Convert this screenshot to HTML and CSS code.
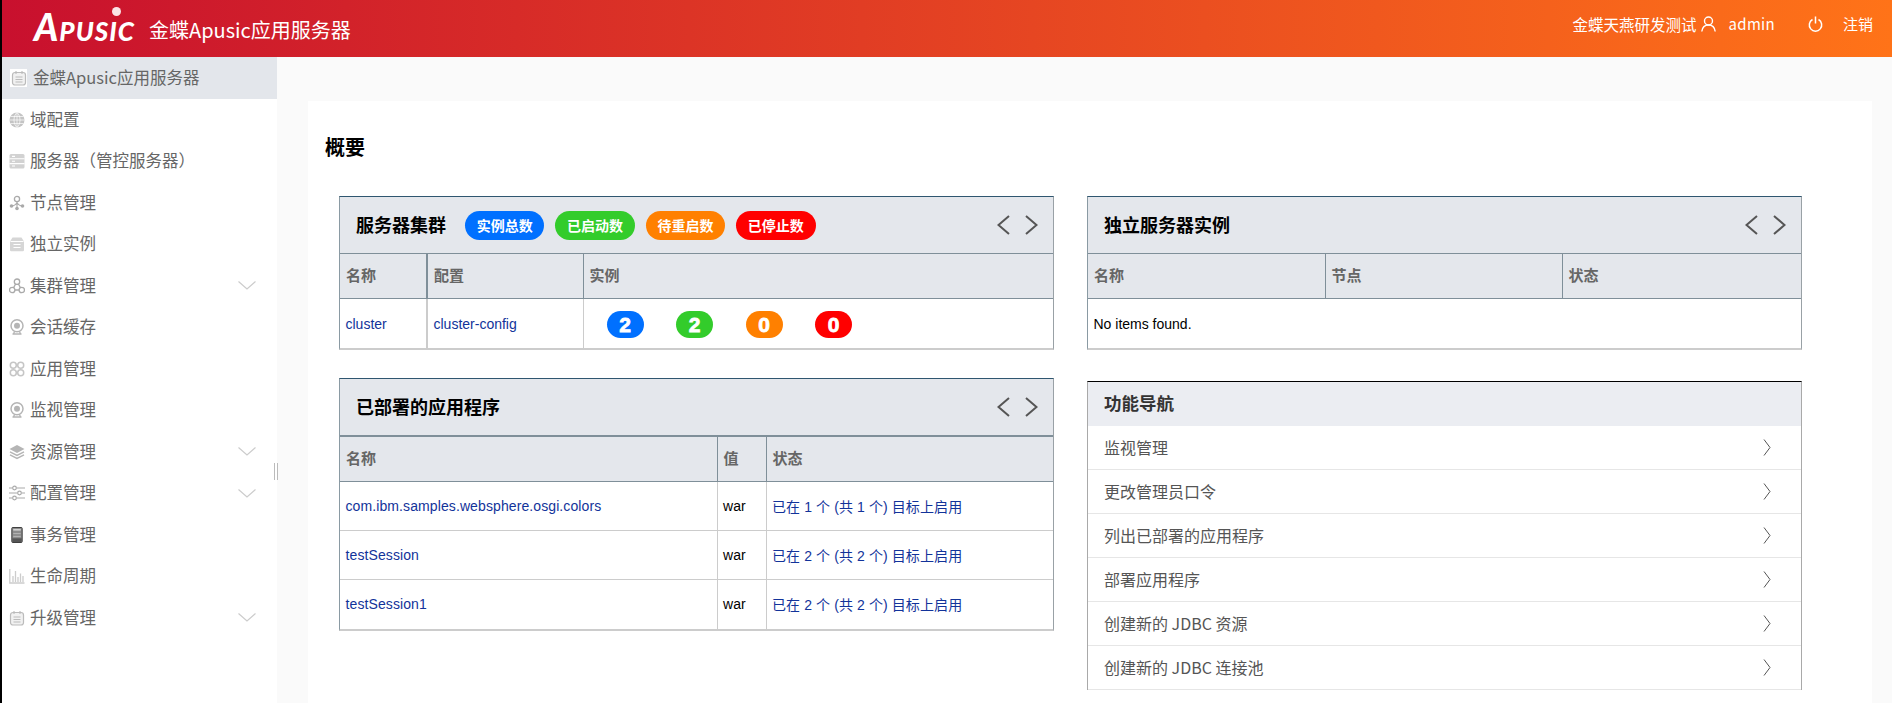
FILE: index.html
```html
<!DOCTYPE html>
<html lang="zh-CN">
<head>
<meta charset="utf-8">
<title>金蝶Apusic应用服务器</title>
<link rel="stylesheet" href="styles.css">
</head>
<body>
<svg class="defs" width="0" height="0" aria-hidden="true">
  <defs>
    <symbol id="i-cal" viewBox="0 0 16 16"><rect x="1.5" y="2.5" width="13" height="12.5" rx="2.5" fill="#f1f1f1" stroke="#bbb" stroke-width="1.2"/><path d="M5 1v3M11 1v3M4.5 7h7M4.5 9.5h7M4.5 12h7" stroke="#bbb" stroke-width="1.1" fill="none"/></symbol>
    <symbol id="i-globe" viewBox="0 0 16 16"><circle cx="8" cy="8" r="7.5" fill="#c4c4c4"/><path d="M.5 8h15M1.5 4.5h13M1.5 11.5h13M8 .5v15M8 .5C4 4 4 12 8 15.5M8 .5c4 3.500 4 11.500 0 15" stroke="#fff" stroke-width=".7" fill="none"/></symbol>
    <symbol id="i-server" viewBox="0 0 16 16"><rect x=".5" y="1" width="15" height="14.500" rx="1.500" fill="#d2d2d2"/><path d="M.5 5.800h15M.5 10.600h15M3 3.400h3M3 8.200h3M3 13h3" stroke="#fff" stroke-width="1.100" fill="none"/></symbol>
    <symbol id="i-node" viewBox="0 0 16 16"><circle cx="8" cy="4" r="2.600" fill="none" stroke="#aaa" stroke-width="1.300"/><circle cx="2.500" cy="11" r="1.800" fill="#aaa"/><circle cx="13.500" cy="11" r="1.800" fill="#aaa"/><circle cx="8" cy="13.500" r="1.800" fill="#aaa"/><path d="M8 6.500v7M2.500 11c3 0 4-1 5.500-3.500 1.500 2.500 2.500 3.500 5.500 3.500" fill="none" stroke="#aaa" stroke-width="1.100"/></symbol>
    <symbol id="i-box" viewBox="0 0 16 16"><path d="M3.500 1.500h9l2.500 4v8.500a1.200 1.200 0 0 1-1.200 1.200H2.200A1.200 1.200 0 0 1 1 14V5.500z" fill="#d6d6d6"/><path d="M1.500 5.500h13M4.500 8.500h7M4.500 11.500h7" stroke="#fff" stroke-width="1.100" fill="none"/></symbol>
    <symbol id="i-cluster" viewBox="0 0 16 16"><g fill="none" stroke="#aaa" stroke-width="1.300"><circle cx="8" cy="3.700" r="2.700"/><circle cx="3.200" cy="12" r="2.700"/><circle cx="12.800" cy="12" r="2.700"/><path d="M6.600 6 4.600 9.600M9.400 6l2 3.600M6 12h4"/></g></symbol>
    <symbol id="i-cam" viewBox="0 0 16 16"><circle cx="8" cy="6.800" r="6" fill="none" stroke="#b5b5b5" stroke-width="1.500"/><circle cx="8" cy="6.800" r="3" fill="#b5b5b5"/><path d="M3.500 15h9M5.500 12.500l-1 2.500M10.500 12.500l1 2.500" fill="none" stroke="#b5b5b5" stroke-width="1.300"/></symbol>
    <symbol id="i-petal" viewBox="0 0 16 16"><g fill="none" stroke="#c6c6c6" stroke-width="1.500"><circle cx="4.300" cy="4.300" r="3"/><circle cx="11.700" cy="4.300" r="3"/><circle cx="4.300" cy="11.700" r="3"/><circle cx="11.700" cy="11.700" r="3"/></g></symbol>
    <symbol id="i-layers" viewBox="0 0 16 16"><path d="M8 1 15.500 5 8 9 .5 5z" fill="#b5b5b5"/><path d="M1 7.800 8 11.500l7-3.700M1 10.800 8 14.500l7-3.700" fill="none" stroke="#b5b5b5" stroke-width="1.500"/></symbol>
    <symbol id="i-sliders" viewBox="0 0 16 16"><g fill="none" stroke="#aaa" stroke-width="1.200"><path d="M0 3h3.500M7.500 3H16M0 8h8.500M12.500 8H16M0 13h3.500M7.500 13H16"/><circle cx="5.500" cy="3" r="1.800"/><circle cx="10.500" cy="8" r="1.800"/><circle cx="5.500" cy="13" r="1.800"/></g></symbol>
    <symbol id="i-tablet" viewBox="0 0 12 17"><rect x=".5" y=".5" width="11" height="16" rx="1" fill="#8c8c8c" stroke="#333"/><path d="M2 3h8" stroke="#dcdcdc" stroke-width="1.500"/><path d="M2 7h8M2 10h8" stroke="#b9b9b9"/><rect x="1" y="12" width="10" height="4" fill="#555"/></symbol>
    <symbol id="i-bars" viewBox="0 0 16 16"><path d="M.8 1v14h14.700" fill="none" stroke="#ccc" stroke-width="1.300"/><path d="M4 8v6M6.500 3v11M9 9v5M11.500 5.500V14M14 8v6" stroke="#ccc" stroke-width="1.300" fill="none"/></symbol>
    <symbol id="i-down" viewBox="0 0 18 9"><path d="M.5.500 9 8l8.500-7.500" fill="none" stroke="#ccc" stroke-width="1.200"/></symbol>
    <symbol id="i-prev" viewBox="0 0 13 20"><path d="M12 1 1.500 10 12 19" fill="none" stroke="#555" stroke-width="2"/></symbol>
    <symbol id="i-next" viewBox="0 0 13 20"><path d="M1 1l10.500 9L1 19" fill="none" stroke="#555" stroke-width="2"/></symbol>
    <symbol id="i-go" viewBox="0 0 8 17"><path d="M1 .5 7 8.500 1 16.500" fill="none" stroke="#555" stroke-width="1"/></symbol>
  </defs>
</svg>

<header class="topbar">
  <div class="logo">Apusic<span class="logo-dot"></span></div>
  <div class="product">金蝶Apusic应用服务器</div>
  <div class="topbar-right">
    <span class="org">金蝶天燕研发测试</span>
    <svg class="top-user" viewBox="0 0 15 16"><circle cx="7.500" cy="5" r="4" fill="none" stroke="#fff" stroke-width="1.400"/><path d="M.8 15.500c.5-4 3-6.500 6.700-6.500s6.200 2.500 6.700 6.500" fill="none" stroke="#fff" stroke-width="1.400"/></svg>
    <span class="user">admin</span>
    <svg class="top-power" viewBox="0 0 15 16"><path d="M4.500 3.500a6.200 6.200 0 1 0 6 0M7.500 .5v7" fill="none" stroke="#fff" stroke-width="1.500"/></svg>
    <span class="logout">注销</span>
  </div>
</header>

<div class="shell">
  <nav class="sidebar">
    <a class="side-item is-active"><span class="side-badge"><svg class="side-icon"><use href="#i-cal"/></svg></span><span class="side-label">金蝶Apusic应用服务器</span></a>
    <a class="side-item"><svg class="side-icon"><use href="#i-globe"/></svg><span class="side-label">域配置</span></a>
    <a class="side-item"><svg class="side-icon"><use href="#i-server"/></svg><span class="side-label">服务器（管控服务器）</span></a>
    <a class="side-item"><svg class="side-icon"><use href="#i-node"/></svg><span class="side-label">节点管理</span></a>
    <a class="side-item"><svg class="side-icon"><use href="#i-box"/></svg><span class="side-label">独立实例</span></a>
    <a class="side-item"><svg class="side-icon"><use href="#i-cluster"/></svg><span class="side-label">集群管理</span><svg class="side-caret"><use href="#i-down"/></svg></a>
    <a class="side-item"><svg class="side-icon"><use href="#i-cam"/></svg><span class="side-label">会话缓存</span></a>
    <a class="side-item"><svg class="side-icon"><use href="#i-petal"/></svg><span class="side-label">应用管理</span></a>
    <a class="side-item"><svg class="side-icon"><use href="#i-cam"/></svg><span class="side-label">监视管理</span></a>
    <a class="side-item"><svg class="side-icon"><use href="#i-layers"/></svg><span class="side-label">资源管理</span><svg class="side-caret"><use href="#i-down"/></svg></a>
    <a class="side-item"><svg class="side-icon"><use href="#i-sliders"/></svg><span class="side-label">配置管理</span><svg class="side-caret"><use href="#i-down"/></svg></a>
    <a class="side-item"><svg class="side-icon"><use href="#i-tablet"/></svg><span class="side-label">事务管理</span></a>
    <a class="side-item"><svg class="side-icon"><use href="#i-bars"/></svg><span class="side-label">生命周期</span></a>
    <a class="side-item"><svg class="side-icon"><use href="#i-cal"/></svg><span class="side-label">升级管理</span><svg class="side-caret"><use href="#i-down"/></svg></a>
    <span class="splitter"></span>
  </nav>

  <main class="main">
    <section class="panel">
      <h1 class="page-title">概要</h1>
      <div class="columns">
        <div class="column">
          <article class="card">
            <div class="card-head">
              <h2 class="card-title">服务器集群</h2>
              <span class="pill pill-blue">实例总数</span>
              <span class="pill pill-green">已启动数</span>
              <span class="pill pill-orange">待重启数</span>
              <span class="pill pill-red">已停止数</span>
              <span class="pager"><svg class="pager-icon"><use href="#i-prev"/></svg><svg class="pager-icon"><use href="#i-next"/></svg></span>
            </div>
            <table class="grid">
              <colgroup><col class="c1a"><col class="c1b"><col></colgroup>
              <thead><tr><th class="th-thick">名称</th><th>配置</th><th>实例</th></tr></thead>
              <tbody><tr class="row-tall">
                <td class="td-thick"><a>cluster</a></td><td><a>cluster-config</a></td>
                <td><div class="counts"><span class="count pill-blue">2</span><span class="count pill-green">2</span><span class="count pill-orange">0</span><span class="count pill-red">0</span></div></td>
              </tr></tbody>
            </table>
          </article>

          <article class="card card-apps">
            <div class="card-head">
              <h2 class="card-title">已部署的应用程序</h2>
              <span class="pager"><svg class="pager-icon"><use href="#i-prev"/></svg><svg class="pager-icon"><use href="#i-next"/></svg></span>
            </div>
            <table class="grid grid-thick">
              <colgroup><col class="c3a"><col class="c3b"><col></colgroup>
              <thead><tr><th>名称</th><th>值</th><th>状态</th></tr></thead>
              <tbody>
                <tr><td><a>com.ibm.samples.websphere.osgi.colors</a></td><td>war</td><td><a>已在 1 个 (共 1 个) 目标上启用</a></td></tr>
                <tr><td><a>testSession</a></td><td>war</td><td><a>已在 2 个 (共 2 个) 目标上启用</a></td></tr>
                <tr><td><a>testSession1</a></td><td>war</td><td><a>已在 2 个 (共 2 个) 目标上启用</a></td></tr>
              </tbody>
            </table>
          </article>
        </div>

        <div class="column">
          <article class="card card-right">
            <div class="card-head">
              <h2 class="card-title">独立服务器实例</h2>
              <span class="pager"><svg class="pager-icon"><use href="#i-prev"/></svg><svg class="pager-icon"><use href="#i-next"/></svg></span>
            </div>
            <table class="grid">
              <colgroup><col class="c2a"><col class="c2a"><col></colgroup>
              <thead><tr><th>名称</th><th>节点</th><th>状态</th></tr></thead>
              <tbody><tr class="row-tall"><td colspan="3" class="td-plain">No items found.</td></tr></tbody>
            </table>
          </article>

          <article class="nav-card">
            <h2 class="nav-title">功能导航</h2>
            <a class="nav-row"><span>监视管理</span><svg class="nav-go"><use href="#i-go"/></svg></a>
            <a class="nav-row"><span>更改管理员口令</span><svg class="nav-go"><use href="#i-go"/></svg></a>
            <a class="nav-row"><span>列出已部署的应用程序</span><svg class="nav-go"><use href="#i-go"/></svg></a>
            <a class="nav-row"><span>部署应用程序</span><svg class="nav-go"><use href="#i-go"/></svg></a>
            <a class="nav-row"><span>创建新的 JDBC 资源</span><svg class="nav-go"><use href="#i-go"/></svg></a>
            <a class="nav-row"><span>创建新的 JDBC 连接池</span><svg class="nav-go"><use href="#i-go"/></svg></a>
          </article>
        </div>
      </div>
    </section>
  </main>
</div>
</body>
</html>
```

FILE: styles.css
```css
* { box-sizing: border-box; }
html, body { height: 100%; }
body {
  margin: 0;
  height: 703px;
  overflow: hidden;
  border-left: 2px solid #000;
  background: #fff;
  font-family: "Liberation Sans", "Noto Sans CJK SC", sans-serif;
  font-size: 14px;
  display: flex;
  flex-direction: column;
}
.defs { position: absolute; }

/* Top bar */
.topbar {
  flex: 0 0 57px;
  display: flex;
  align-items: center;
  color: #fff;
  background: linear-gradient(to right, #c8102e, #ff7318);
}
.logo {
  position: relative;
  flex: 0 0 115px;
  margin-left: 32px;
  font: italic 900 37px/1 "Lato", sans-serif;
  font-variant: small-caps;
  letter-spacing: 1px;
  color: #fff;
  transform: translateY(-2px);
}
.logo-dot {
  position: absolute;
  left: 78px;
  top: -1px;
  width: 9px;
  height: 9px;
  border-radius: 50%;
  background: #fbe4e6;
}
.product {
  font: 20px/1 "Noto Sans CJK SC", sans-serif;
  margin-top: 2px;
}
.topbar-right {
  margin-left: auto;
  display: flex;
  align-items: center;
  font-family: "Noto Sans CJK SC", sans-serif;
  font-size: 15px;
  padding-right: 19px;
  margin-top: -10px;
}
.org { font-size: 15.500px; }
.top-user { width: 15px; height: 16px; margin-left: 4px; }
.user { margin-left: 13px; letter-spacing: .3px; }
.top-power { width: 15px; height: 16px; margin-left: 33px; }
.logout { margin-left: 20px; }

/* Shell */
.shell { flex: 1; display: flex; min-height: 0; }
.sidebar { position: relative; flex: 0 0 275px; background: #fff; }
.side-item {
  display: flex;
  align-items: center;
  height: 41.500px;
  padding: 0 21px 0 7px;
  color: #666;
  font: 16.500px/1 "Noto Sans CJK SC", sans-serif;
}
.side-item.is-active { height: 42px; background: #e3e6eb; padding-left: 8px; }
.side-label { margin-top: -2px; }
.side-badge {
  display: flex;
  align-items: center;
  justify-content: center;
  width: 17px;
  height: 18px;
  background: #fff;
  margin-right: 6px;
}
.side-icon { flex: none; width: 16px; height: 16px; margin-right: 5px; }
.side-badge .side-icon { margin: 0; }
.side-caret { width: 18px; height: 9px; margin-left: auto; }
.splitter {
  position: absolute;
  left: 272px;
  top: 406px;
  width: 4px;
  height: 17px;
  border-left: 1px solid #bbb;
  border-right: 1px solid #bbb;
}

/* Main */
.main { flex: 1; background: #fafafa; padding: 44px 20px 0 31px; min-width: 0; }
.panel { background: #fff; height: 100%; padding: 0 70px 0 17px; overflow: hidden; }
.page-title {
  margin: 0;
  height: 95px;
  padding-top: 33px;
  font: 700 20px/26px "Noto Sans CJK SC", sans-serif;
  color: #000;
}
.columns { display: grid; grid-template-columns: 715px 715px; column-gap: 33px; margin-left: 14px; }
.column { display: flex; flex-direction: column; }

/* Cards */
.card {
  border-top: 1px solid #2f5670;
  border-left: 1px solid #8a9aa3;
  border-right: 1px solid #99a1a6;
  border-bottom: 2px solid #ccc;
}
.card-apps { margin-top: 28px; }
.card-head {
  height: 56px;
  display: flex;
  align-items: center;
  gap: 11px;
  padding-left: 16px;
  background: #e4e7ec;
}
.card-title { margin: -2px 8px 0 0; font: 700 18px/1 "Noto Sans CJK SC", sans-serif; color: #000; }
.pill {
  height: 29px;
  padding: 0 11.700px;
  border-radius: 15px;
  color: #fff;
  font: 700 14px/29px "Noto Sans CJK SC", sans-serif;
}
.pill-blue { background: #0070ff; }
.pill-green { background: #33cc2b; }
.pill-orange { background: #ff8000; }
.pill-red { background: #f00; }
.pager { margin-left: auto; margin-right: 15px; display: flex; gap: 15px; }
.pager-icon { width: 13px; height: 20px; }

/* Tables */
.grid { width: 100%; border-collapse: collapse; table-layout: fixed; }
.c1a { width: 87px; }
.c1b { width: 156px; }
.c2a { width: 237px; }
.c3a { width: 377px; }
.c3b { width: 49px; }
.grid th {
  height: 45px;
  padding: 0 6px 3px;
  text-align: left;
  background: #e4e7ec;
  color: #666;
  font: 700 15px/1 "Noto Sans CJK SC", sans-serif;
  border-top: 1px solid #7f8f99;
  border-bottom: 1px solid #7f8f99;
  border-right: 1px solid #7f8f99;
}
.grid th:last-child { border-right: 0; }
.grid-thick th { height: 46px; border-top: 2px solid #7f8f99; }
.grid td {
  height: 49px;
  padding: 0 5.500px;
  color: #000;
  border-right: 1px solid #ccc;
  border-bottom: 1px solid #ccc;
}
.grid .row-tall td { padding-top: 2px; }
.grid-thick td { letter-spacing: .1px; }
.grid td:last-child { border-right: 0; }
.grid tr:last-child td { border-bottom: 0; }
.grid a { color: #12339a; }
.grid .th-thick { border-right-width: 2px; }
.grid .td-thick { border-right: 2px solid #ccc; }
.counts { display: flex; gap: 32.500px; padding-left: 17.500px; }
.count {
  width: 37px;
  height: 27px;
  border-radius: 14px;
  text-align: center;
  color: #fff;
  font: 900 21px/27px "Liberation Sans", sans-serif;
  -webkit-text-stroke: .8px #fff;
}

/* Quick navigation */
.nav-card {
  margin-top: 31px;
  border-top: 1px solid #000;
  border-left: 1px solid #a9a9a9;
  border-right: 1px solid #a9a9a9;
}
.nav-title {
  margin: 0;
  height: 44px;
  padding-left: 16px;
  background: #ebedf2;
  color: #333;
  font: 700 17.500px/42px "Noto Sans CJK SC", sans-serif;
}
.nav-row {
  display: flex;
  align-items: center;
  justify-content: space-between;
  height: 44px;
  padding: 0 30px 0 16px;
  color: #555;
  font: 16px/1 "Noto Sans CJK SC", sans-serif;
  border-bottom: 1px solid #e6e6e6;
}
.nav-go { width: 8px; height: 17px; }
```
